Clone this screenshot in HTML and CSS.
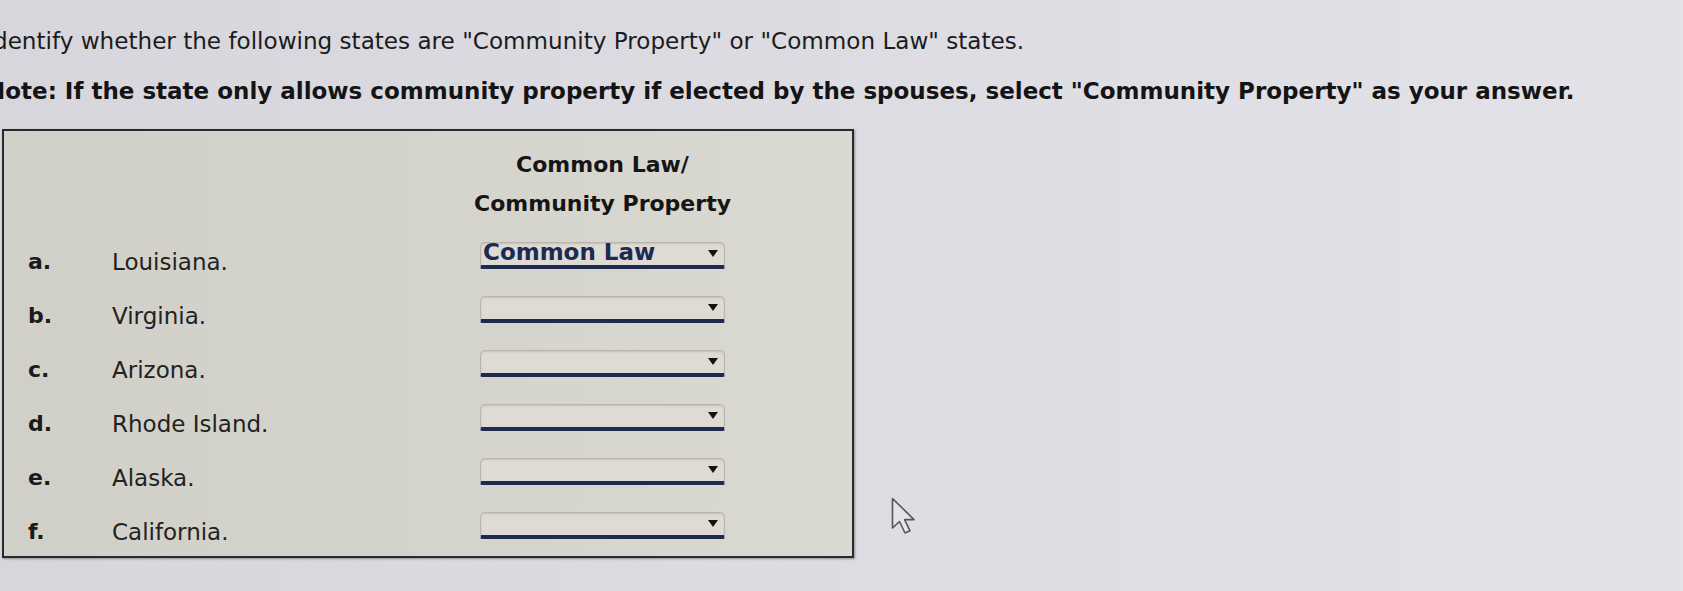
FILE: index.html
```html
<!DOCTYPE html>
<html lang="en">
<head>
<meta charset="utf-8">
<title>Common Law / Community Property</title>
<link rel="stylesheet" href="styles.css">
</head>
<body>
<div class="page">
  <p class="intro">dentify whether the following states are "Community Property" or "Common Law" states.</p>
  <p class="note">Note: If the state only allows community property if elected by the spouses, select "Community Property" as your answer.</p>
  <div class="panel">
    <div class="head">
      <div class="head-text">Common Law/<br>Community Property</div>
    </div>
    <div class="row">
      <span class="letter">a.</span><span class="state">Louisiana.</span>
      <div class="select"><span class="value">Common Law</span><span class="arrow"></span></div>
    </div>
    <div class="row">
      <span class="letter">b.</span><span class="state">Virginia.</span>
      <div class="select"><span class="arrow"></span></div>
    </div>
    <div class="row">
      <span class="letter">c.</span><span class="state">Arizona.</span>
      <div class="select"><span class="arrow"></span></div>
    </div>
    <div class="row">
      <span class="letter">d.</span><span class="state">Rhode Island.</span>
      <div class="select"><span class="arrow"></span></div>
    </div>
    <div class="row">
      <span class="letter">e.</span><span class="state">Alaska.</span>
      <div class="select"><span class="arrow"></span></div>
    </div>
    <div class="row">
      <span class="letter">f.</span><span class="state">California.</span>
      <div class="select"><span class="arrow"></span></div>
    </div>
  </div>
  <svg class="cursor" width="26" height="38" viewBox="0 0 26 38" aria-hidden="true">
    <path d="M1.5 1.5 L1.5 31 L8.5 24.5 L14 36 L19 33.8 L13.6 22.6 L23 22.6 Z" fill="#e4e4ea" stroke="#55555c" stroke-width="1.6" stroke-linejoin="round"/>
  </svg>
</div>
</body>
</html>
```

FILE: styles.css
```css
html, body {
  margin: 0;
  padding: 0;
}

body {
  background: linear-gradient(90deg, #d6d6dc 0%, #dcdce2 50%, #e2e2e8 100%);
  font-family: "DejaVu Sans", Verdana, sans-serif;
  color: #161616;
  width: 1683px;
  height: 591px;
  overflow: hidden;
}

.page {
  position: relative;
  padding-top: 16px;
}

.intro,
.note {
  margin: 0;
  height: 50px;
  line-height: 50px;
  white-space: nowrap;
}

.intro {
  font-size: 23.1px;
  margin-left: -7px;
  color: #1c1c1c;
}

.note {
  font-size: 23px;
  font-weight: bold;
  margin-left: -14px;
  color: #141414;
}

.panel {
  margin-top: 13px;
  margin-left: 2px;
  width: 852px;
  box-sizing: border-box;
  border: 2px solid #2a2a2a;
  background: linear-gradient(90deg, #d1d0c8 0%, #d6d5cd 60%, #dad9d2 100%);
  padding: 14px 0 0 24px;
  height: 429px;
  box-shadow: 1px 1px 2px rgba(0, 0, 0, 0.35);
}

.head {
  display: grid;
  grid-template-columns: 84px 368px 245px;
}

.head-text {
  grid-column: 3;
  justify-self: center;
  white-space: nowrap;
  text-align: center;
  font-weight: bold;
  font-size: 22px;
  line-height: 39px;
  color: #151515;
}

.row {
  display: grid;
  grid-template-columns: 84px 368px 245px;
  height: 54px;
  line-height: 54px;
}

.head + .row {
  margin-top: 12px;
}

.letter {
  font-weight: bold;
  font-size: 22px;
  color: #1a1a1a;
}

.state {
  font-size: 23px;
  color: #222;
}

.select {
  position: relative;
  align-self: start;
  margin-top: 7px;
  width: 245px;
  height: 27px;
  box-sizing: border-box;
  border: 1px solid #b7b5ad;
  border-bottom: 4px solid #1f2a4f;
  border-radius: 5px 5px 2px 2px;
  background: #dddbd4;
  box-shadow: inset 0 1px 2px rgba(0, 0, 0, 0.12);
  display: flex;
  align-items: flex-end;
  line-height: 1;
}

.value {
  font-weight: bold;
  font-size: 23px;
  color: #1d2a52;
  padding-left: 2px;
  padding-bottom: 1px;
}

.arrow {
  position: absolute;
  right: 6px;
  top: 7px;
  width: 0;
  height: 0;
  border-left: 5px solid transparent;
  border-right: 5px solid transparent;
  border-top: 7px solid #111;
}

.cursor {
  position: absolute;
  left: 891px;
  top: 497px;
}
```
